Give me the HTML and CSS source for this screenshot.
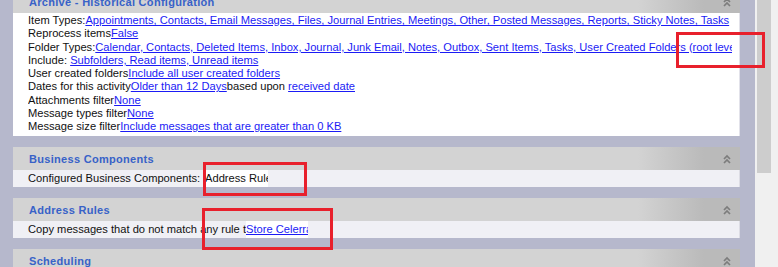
FILE: index.html
```html
<!DOCTYPE html>
<html>
<head>
<meta charset="utf-8">
<link rel="stylesheet" href="styles.css">
</head>
<body>
<div class="page">
  <div class="main">
    <section class="panel first">
      <div class="phead">
        <span class="ptitle">Archive - Historical Configuration</span>
        <svg class="chev" width="8" height="10" viewBox="0 0 8 10"><polyline points="1,5 4,2 7,5"/><polyline points="1,9 4,6 7,9"/></svg>
      </div>
      <div class="pbody archive">
        <div class="row">Item Types:<a href="#">Appointments, Contacts, Email Messages, Files, Journal Entries, Meetings, Other, Posted Messages, Reports, Sticky Notes, Tasks</a></div>
        <div class="row">Reprocess items<a href="#">False</a></div>
        <div class="row">Folder Types:<a href="#">Calendar, Contacts, Deleted Items, Inbox, Journal, Junk Email, Notes, Outbox, Sent Items, Tasks, User Created Folders (root level only)</a></div>
        <div class="row">Include: <a href="#">Subfolders, Read items, Unread items</a></div>
        <div class="row">User created folders<a href="#">Include all user created folders</a></div>
        <div class="row">Dates for this activity<a href="#">Older than 12 Days</a>based upon <a href="#">received date</a></div>
        <div class="row">Attachments filter<a href="#">None</a></div>
        <div class="row">Message types filter<a href="#">None</a></div>
        <div class="row">Message size filter<a href="#">Include messages that are greater than 0 KB</a></div>
      </div>
    </section>

    <section class="panel">
      <div class="phead">
        <span class="ptitle">Business Components</span>
        <svg class="chev" width="8" height="10" viewBox="0 0 8 10"><polyline points="1,5 4,2 7,5"/><polyline points="1,9 4,6 7,9"/></svg>
      </div>
      <div class="pbody single">
        <span class="lbl lbl-bc">Configured Business Components:</span><span class="val">Address Rules</span>
      </div>
    </section>

    <section class="panel">
      <div class="phead">
        <span class="ptitle">Address Rules</span>
        <svg class="chev" width="8" height="10" viewBox="0 0 8 10"><polyline points="1,5 4,2 7,5"/><polyline points="1,9 4,6 7,9"/></svg>
      </div>
      <div class="pbody single">
        <span class="lbl lbl-ar">Copy messages that do not match any rule to</span><a href="#" class="val link">Store Celerra</a>
      </div>
    </section>

    <section class="panel">
      <div class="phead">
        <span class="ptitle">Scheduling</span>
        <svg class="chev" width="8" height="10" viewBox="0 0 8 10"><polyline points="1,5 4,2 7,5"/><polyline points="1,9 4,6 7,9"/></svg>
      </div>
    </section>
  </div>
  <div class="scrollbar"><div class="thumb"></div></div>

  <div class="mark mark1"></div>
  <div class="mark mark2"></div>
  <div class="mark mark3"></div>
</div>
</body>
</html>
```

FILE: styles.css
```css
html, body {
  margin: 0;
  padding: 0;
  height: 100%;
  overflow: hidden;
}
body {
  background: #b6b8cc;
  font-family: "Liberation Sans", Arial, sans-serif;
  font-size: 11.15px;
  color: #111;
}
.page {
  position: relative;
  display: flex;
  height: 267px;
}
.main {
  width: 727px;
  padding-left: 13px;
  padding-right: 15px;
  display: flex;
  flex-direction: column;
  gap: 11px;
}
.panel {
  flex: none;
}
.panel.first {
  margin-top: -10px;
}
.phead {
  height: 23px;
  display: flex;
  align-items: center;
  justify-content: space-between;
  padding-left: 16px;
  padding-right: 9px;
  background: linear-gradient(to right, #d3d3d3 0%, #d3d3d3 86%, #bababa 95%, #bababa 100%);
}
.ptitle {
  font-weight: bold;
  font-size: 11px;
  letter-spacing: 0.3px;
  color: #3862c8;
  line-height: 23px;
  padding-top: 1px;
}
.chev {
  display: block;
}
.chev polyline {
  fill: none;
  stroke: #7c7c7c;
  stroke-width: 1.7;
}
.pbody {
  padding-left: 15px;
  padding-right: 7px;
}
.archive {
  background: #ffffff;
  padding-top: 1px;
  padding-bottom: 3px;
  border-right: 1px solid #e2e2ea;
}
.row {
  height: 13.25px;
  line-height: 13.25px;
  white-space: nowrap;
  overflow: hidden;
}
a {
  color: #1b1bf5;
  text-decoration: underline;
}
.single {
  height: 17px;
  line-height: 17px;
  background: #f0f0f5;
  display: flex;
  white-space: nowrap;
  border-right: 1px solid #dcdce4;
  box-sizing: border-box;
}
.lbl {
  flex: none;
  display: block;
}
.lbl-bc {
  width: 177px;
}
.lbl-ar {
  width: 218px;
  overflow: visible;
}
.val {
  flex: none;
  display: block;
  width: 63px;
  overflow: hidden;
  background: #ffffff;
  position: relative;
}
.link {
  width: 62px;
}
.scrollbar {
  width: 23px;
  background: #f0f0f0;
  padding-left: 2px;
  box-sizing: border-box;
}
.thumb {
  width: 14px;
  height: 173px;
  background: #cdcdcd;
}
.mark {
  position: absolute;
  border: 3px solid #e8202c;
  box-sizing: border-box;
}
.mark1 {
  left: 676px;
  top: 32px;
  width: 89px;
  height: 36px;
}
.mark2 {
  left: 203px;
  top: 162px;
  width: 104px;
  height: 34px;
}
.mark3 {
  left: 202px;
  top: 208px;
  width: 131px;
  height: 42px;
}
```
